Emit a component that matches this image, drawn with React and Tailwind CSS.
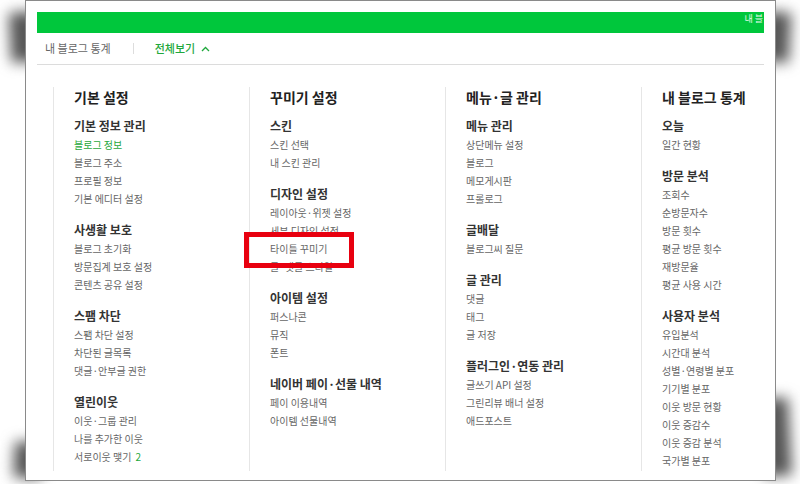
import React from "react";

const COLUMNS = [
  {
    title: "기본 설정",
    sections: [
      { head: "기본 정보 관리", items: [{ t: "블로그 정보", on: true }, "블로그 주소", "프로필 정보", "기본 에디터 설정"] },
      { head: "사생활 보호", items: ["블로그 초기화", "방문집계 보호 설정", "콘텐츠 공유 설정"] },
      { head: "스팸 차단", items: ["스팸 차단 설정", "차단된 글목록", "댓글·안부글 권한"] },
      { head: "열린이웃", items: ["이웃·그룹 관리", "나를 추가한 이웃", { t: "서로이웃 맺기", badge: "2" }] },
    ],
  },
  {
    title: "꾸미기 설정",
    sections: [
      { head: "스킨", items: ["스킨 선택", "내 스킨 관리"] },
      { head: "디자인 설정", items: ["레이아웃·위젯 설정", "세부 디자인 설정", "타이틀 꾸미기", "글·댓글 스타일"] },
      { head: "아이템 설정", items: ["퍼스나콘", "뮤직", "폰트"] },
      { head: "네이버 페이·선물 내역", items: ["페이 이용내역", "아이템 선물내역"] },
    ],
  },
  {
    title: "메뉴·글 관리",
    sections: [
      { head: "메뉴 관리", items: ["상단메뉴 설정", "블로그", "메모게시판", "프롤로그"] },
      { head: "글배달", items: ["블로그씨 질문"] },
      { head: "글 관리", items: ["댓글", "태그", "글 저장"] },
      { head: "플러그인·연동 관리", items: ["글쓰기 API 설정", "그린리뷰 배너 설정", "애드포스트"] },
    ],
  },
  {
    title: "내 블로그 통계",
    sections: [
      { head: "오늘", items: ["일간 현황"] },
      { head: "방문 분석", items: ["조회수", "순방문자수", "방문 횟수", "평균 방문 횟수", "재방문율", "평균 사용 시간"] },
      {
        head: "사용자 분석",
        items: ["유입분석", "시간대 분석", "성별·연령별 분포", "기기별 분포", "이웃 방문 현황", "이웃 증감수", "이웃 증감 분석", "국가별 분포"],
      },
    ],
  },
];

const Item = ({ item }) => {
  const it = typeof item === "string" ? { t: item } : item;
  return (
    <li className={`h-[18px] leading-[18px] text-[10px] ${it.on ? "text-[#1fa83c]" : "text-[#666]"}`}>
      {it.t}
      {it.badge && <span className="ml-1 text-[#1fa83c]">{it.badge}</span>}
    </li>
  );
};

const Column = ({ col, last }) => (
  <div className={`${last ? "flex-1" : "w-[196px] shrink-0"} border-l border-[#e6e6e6] pl-5`}>
    <h2 className="h-5 leading-5 text-[14px] font-bold text-[#222]">{col.title}</h2>
    <div className="mt-[9px] flex flex-col gap-3">
      {col.sections.map((s) => (
        <div key={s.head}>
          <h3 className="h-5 leading-5 text-[12px] font-bold text-[#333]">{s.head}</h3>
          <ul>
            {s.items.map((it, i) => (
              <Item key={i} item={it} />
            ))}
          </ul>
        </div>
      ))}
    </div>
  </div>
);

export default function App() {
  return (
    <div className="relative h-[484px] w-[800px] overflow-hidden bg-white" style={{ fontFamily: '"Noto Sans CJK KR", "Noto Sans", sans-serif' }}>
      {/* curled page shadows behind the window */}
      <div className="absolute left-[10px] top-[12px] h-[50px] w-[28px] -rotate-3 bg-[#555] blur-[7px]" />
      <div className="absolute left-[14px] top-[442px] h-[36px] w-[28px] rotate-3 bg-[#555] blur-[7px]" />
      <div className="absolute right-[10px] top-[12px] h-[50px] w-[28px] rotate-3 bg-[#555] blur-[7px]" />
      <div className="absolute right-[10px] top-[398px] h-[78px] w-[28px] -rotate-3 bg-[#555] blur-[7px]" />

      <div className="relative ml-[25px] h-[481px] w-[751px] border border-[#8a8a8a] bg-white px-[11px] pt-[11px]">
        <div className="flex h-[21px] items-start justify-end overflow-hidden bg-[#00c73c] pt-[2px] pr-[1px]">
          <span className="text-[9px] leading-[10px] text-white/90">내 블</span>
        </div>

        <nav className="flex h-[32px] items-center border-b border-[#dcdcdc] pl-2 text-[11px]">
          <span className="text-[#666]">내 블로그 통계</span>
          <span className="ml-[22px] h-[11px] w-px bg-[#ddd]" />
          <span className="ml-[21px] flex items-center gap-[6px] font-medium text-[#1fa83c]">
            전체보기
            <svg width="9" height="6" viewBox="0 0 9 6" fill="none" stroke="currentColor" strokeWidth="1.3">
              <path d="M1 5 L4.5 1.5 L8 5" />
            </svg>
          </span>
        </nav>

        <div className="mt-[22px] flex h-[384px] overflow-hidden pl-[16px]">
          {COLUMNS.map((c, i) => (
            <Column key={c.title} col={c} last={i === COLUMNS.length - 1} />
          ))}
        </div>

        {/* red annotation box over the menu */}
        <div className="absolute left-[218px] top-[231px] h-[36px] w-[110px] border-[5px] border-[#e8000f]" />
      </div>
    </div>
  );
}
